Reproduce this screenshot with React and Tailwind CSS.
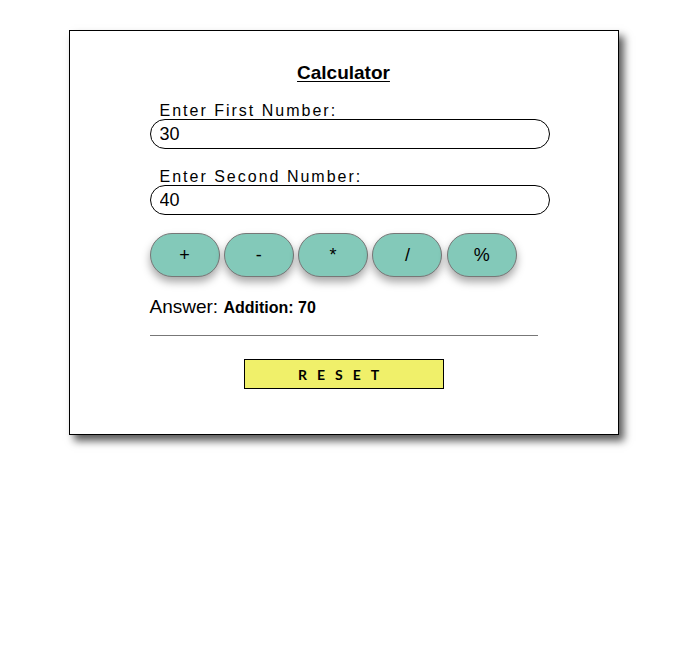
import { useState } from 'react';

// Simple two-number calculator card.

const OPS = [
  { sym: '+', name: 'Addition', fn: (a, b) => a + b },
  { sym: '-', name: 'Subtraction', fn: (a, b) => a - b },
  { sym: '*', name: 'Multiplication', fn: (a, b) => a * b },
  { sym: '/', name: 'Division', fn: (a, b) => a / b },
  { sym: '%', name: 'Modulus', fn: (a, b) => a % b },
];

export default function App() {
  const [first, setFirst] = useState('30');
  const [second, setSecond] = useState('40');
  const [answer, setAnswer] = useState('Addition: 70');

  const run = (op) => {
    const a = parseFloat(first);
    const b = parseFloat(second);
    if (isNaN(a) || isNaN(b)) return setAnswer('');
    setAnswer(`${op.name}: ${op.fn(a, b)}`);
  };

  const reset = () => {
    setFirst('');
    setSecond('');
    setAnswer('');
  };

  return (
    <div className="min-h-[645px] bg-white pt-[30px] font-['Liberation_Sans',Arial,sans-serif] text-black">
      <div className="mx-auto w-[550px] border border-black bg-white pt-[31px] pb-[45px] shadow-[5px_6px_8px_rgba(0,0,0,0.65)]">
        <h1 className="text-center text-[19px] leading-[21px] font-bold underline underline-offset-2">
          Calculator
        </h1>

        <div className="ml-[80px] mt-[19px] w-[388px]">
          <label className="block pl-[10px] text-[16px] leading-[17px] tracking-[2px]">
            Enter First Number:
          </label>
          <input
            value={first}
            onChange={(e) => setFirst(e.target.value)}
            className="block h-[30px] w-[400px] rounded-full border border-black px-[9px] text-[18px] outline-none"
          />

          <label className="mt-[19px] block pl-[10px] text-[16px] leading-[17px] tracking-[2px]">
            Enter Second Number:
          </label>
          <input
            value={second}
            onChange={(e) => setSecond(e.target.value)}
            className="block h-[30px] w-[400px] rounded-full border border-black px-[9px] text-[18px] outline-none"
          />

          <div className="mt-[18px] flex gap-[4.3px]">
            {OPS.map((op) => (
              <button
                key={op.sym}
                type="button"
                onClick={() => run(op)}
                className="h-[44px] w-[70px] rounded-full border border-[#777] bg-[#83c9b9] text-[18px] shadow-[0_5px_8px_rgba(0,0,0,0.35)]"
              >
                {op.sym}
              </button>
            ))}
          </div>

          <p className="mt-[19px] text-[19px] leading-[21px]">
            Answer: <span className="text-[16px] font-bold">{answer}</span>
          </p>

          <hr className="mt-[17px] border-0 border-t border-[#777]" />

          <div className="mt-[23px] flex justify-center">
            <button
              type="button"
              onClick={reset}
              className="h-[30px] w-[200px] border border-black bg-[#f0f06a] font-['Lato',sans-serif] text-[14px] font-bold tracking-[10px]"
            >
              RESET
            </button>
          </div>
        </div>
      </div>
    </div>
  );
}
